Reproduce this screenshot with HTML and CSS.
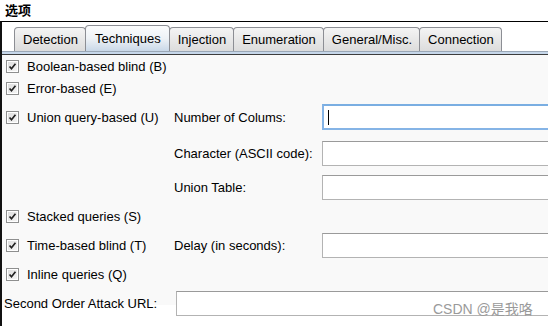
FILE: index.html
```html
<!DOCTYPE html>
<html lang="en">
<head>
  <meta charset="UTF-8">
  <title>选项</title>
  <link rel="stylesheet" href="styles.css">
</head>
<body>

<div class="title">选项</div>

<div class="group">
  <div class="tabs">
    <div class="tab">Detection</div>
    <div class="tab active">Techniques</div>
    <div class="tab">Injection</div>
    <div class="tab">Enumeration</div>
    <div class="tab">General/Misc.</div>
    <div class="tab">Connection</div>
  </div>
  <div class="tab-line"></div>

  <div class="panel">
    <label class="check r1"><span class="box"><svg viewBox="0 0 13 13"><path d="M3 6.5 L5.3 9.2 L10 3.2" /></svg></span>Boolean-based blind (B)</label>

    <label class="check r2"><span class="box"><svg viewBox="0 0 13 13"><path d="M3 6.5 L5.3 9.2 L10 3.2" /></svg></span>Error-based (E)</label>

    <label class="check r3"><span class="box"><svg viewBox="0 0 13 13"><path d="M3 6.5 L5.3 9.2 L10 3.2" /></svg></span>Union query-based (U)</label>
    <div class="field-label r3">Number of Colums:</div>
    <div class="field r3"><div class="input focus"><span class="caret"></span></div></div>

    <div class="field-label r4">Character (ASCII code):</div>
    <div class="field r4"><div class="input"></div></div>

    <div class="field-label r5">Union Table:</div>
    <div class="field r5"><div class="input"></div></div>

    <label class="check r6"><span class="box"><svg viewBox="0 0 13 13"><path d="M3 6.5 L5.3 9.2 L10 3.2" /></svg></span>Stacked queries (S)</label>

    <label class="check r7"><span class="box"><svg viewBox="0 0 13 13"><path d="M3 6.5 L5.3 9.2 L10 3.2" /></svg></span>Time-based blind (T)</label>
    <div class="field-label r7">Delay (in seconds):</div>
    <div class="field r7"><div class="input"></div></div>

    <label class="check r8"><span class="box"><svg viewBox="0 0 13 13"><path d="M3 6.5 L5.3 9.2 L10 3.2" /></svg></span>Inline queries (Q)</label>

    <div class="url-row r9">
      <span class="url-label">Second Order Attack URL:</span>
      <div class="input wide"></div>
    </div>
  </div>

  <div class="watermark">CSDN @是我咯</div>
</div>

</body>
</html>
```

FILE: styles.css
```css
html, body {
  margin: 0;
  overflow: hidden;
}
body {
  width: 548px;
  height: 326px;
  background: #fff;
  font-family: "Liberation Sans", Arial, sans-serif;
  font-size: 13px;
  color: #000;
}
.title {
  height: 21px;
  padding-left: 5px;
  font-family: "Noto Sans CJK SC", sans-serif;
  font-size: 13px;
  font-weight: bold;
  line-height: 20px;
}
.group {
  position: relative;
  border-top: 1px solid #000;
  border-left: 2px solid #111;
  height: 304px;
}
.tabs {
  display: flex;
  align-items: flex-end;
  height: 29px;
  padding-left: 12px;
}
.tab {
  height: 23px;
  line-height: 23px;
  padding: 0 7px 0 8px;
  border: 1px solid #8c8e94;
  border-bottom: none;
  border-radius: 4px 4px 0 0;
  background: linear-gradient(#f4f4f4, #e8e8e8 50%, #dcdcdc);
  margin-right: -1px;
}
.tab.active {
  height: 25px;
  line-height: 25px;
  padding: 0 8px 0 9px;
  background: linear-gradient(#fbfcfd, #eef2f6 50%, #c9d8e8);
  position: relative;
  z-index: 1;
}
.tab-line {
  height: 2px;
  background: #c6d7ea;
  border-top: 1px solid #9aa7b6;
  border-bottom: 1px solid #3d3d3d;
}
.panel {
  display: grid;
  grid-template-columns: 168px 148px 1fr;
  grid-template-rows: 22px 22px 36px 36px 32px 26px 32px 26px 32px;
  align-items: center;
  align-content: start;
  padding-left: 4px;
  background: #f9f9f9;
  height: 250px;
}
.r1 { grid-row: 1; }
.r2 { grid-row: 2; }
.r3 { grid-row: 3; }
.r4 { grid-row: 4; }
.r5 { grid-row: 5; }
.r6 { grid-row: 6; }
.r7 { grid-row: 7; }
.r8 { grid-row: 8; }
.r9 { grid-row: 9; }
.check {
  grid-column: 1;
  display: flex;
  align-items: center;
  gap: 8px;
}
.box {
  width: 11px;
  height: 11px;
  border: 1px solid #8e8f8f;
  background: linear-gradient(135deg, #dcdcdc, #f6f6f6);
  box-shadow: inset 0 0 0 1px #fff;
  display: flex;
}
.box svg {
  width: 11px;
  height: 11px;
  fill: none;
  stroke: #212121;
  stroke-width: 2;
}
.field-label {
  grid-column: 2;
}
.field {
  grid-column: 3;
  overflow: hidden;
}
.input {
  height: 23px;
  width: 400px;
  background: #fff;
  border: 1px solid #b3b3b3;
  border-top-color: #9a9a9a;
}
.input.focus {
  height: 22px;
  border: 2px solid #85b4e6;
  border-top-color: #7aaee2;
  display: flex;
  align-items: center;
  padding-left: 4px;
}
.caret {
  width: 1px;
  height: 15px;
  background: #000;
}
.url-row {
  grid-column: 1 / 4;
  display: flex;
  align-items: center;
  gap: 10px;
  margin-left: -2px;
}
.url-label {
  width: 162px;
  flex: none;
}
.input.wide {
  width: 420px;
  flex: none;
}
.watermark {
  position: absolute;
  left: 431px;
  top: 276px;
  color: #9a9a9a;
  font-family: "Liberation Sans", "Noto Sans CJK SC", sans-serif;
  font-size: 14px;
}
```
